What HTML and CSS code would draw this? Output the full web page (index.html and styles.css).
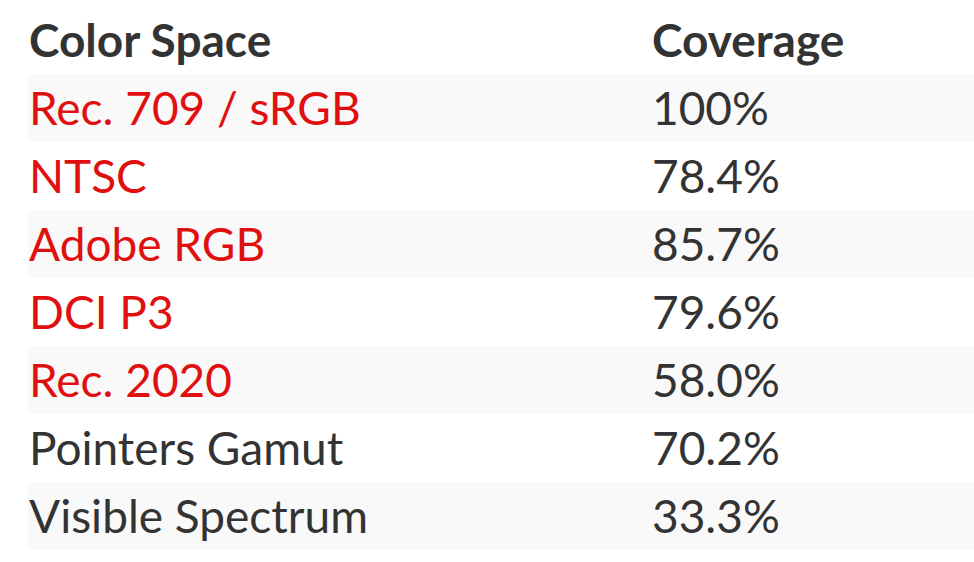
FILE: index.html
```html
<!DOCTYPE html>
<html>
<head>
<meta charset="utf-8">
<link rel="stylesheet" href="styles.css">
</head>
<body>
<table class="gamut">
  <thead>
    <tr><th class="c1">Color Space</th><th class="c2">Coverage</th></tr>
  </thead>
  <tbody>
    <tr><td class="name red">Rec. 709 / sRGB</td><td>100%</td></tr>
    <tr><td class="name red">NTSC</td><td>78.4%</td></tr>
    <tr><td class="name red">Adobe RGB</td><td>85.7%</td></tr>
    <tr><td class="name red">DCI P3</td><td>79.6%</td></tr>
    <tr><td class="name red">Rec. 2020</td><td>58.0%</td></tr>
    <tr><td class="name">Pointers Gamut</td><td>70.2%</td></tr>
    <tr><td class="name">Visible Spectrum</td><td>33.3%</td></tr>
  </tbody>
</table>
</body>
</html>
```
FILE: styles.css
```css
html, body {
  margin: 0;
  padding: 0;
  background: #fff;
}
body {
  font-family: Lato, "Noto Sans", sans-serif;
  color: #333;
  padding: 6px 0 0 28px;
}
.gamut {
  border-collapse: collapse;
  width: 960px;
  font-size: 46px;
}
.gamut th,
.gamut td {
  height: 68px;
  padding: 0 1px;
  text-align: left;
  vertical-align: middle;
  line-height: 68px;
}
.gamut th {
  font-weight: 700;
}
.gamut .c1 {
  width: 621px;
}
.gamut tbody tr:nth-child(odd) {
  background: #f9f9f9;
}
.gamut .red {
  color: #e01010;
}
```
